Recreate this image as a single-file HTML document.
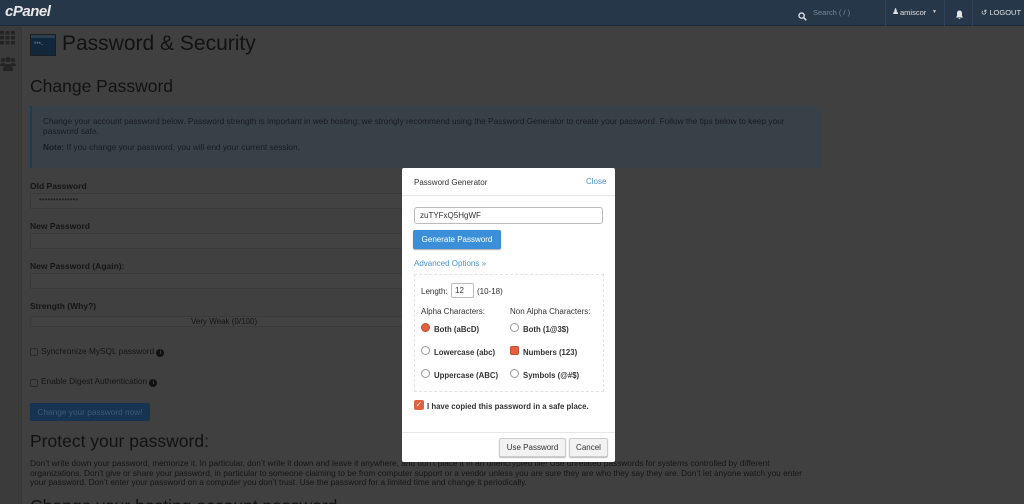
<!DOCTYPE html>
<html><head><meta charset="utf-8"><style>
*{box-sizing:border-box;margin:0;padding:0}
html,body{width:1024px;height:504px;overflow:hidden}
body{background:#404040;font-family:"Liberation Sans","DejaVu Sans",sans-serif;color:#111;position:relative}
.hdr{position:absolute;left:0;top:0;width:1024px;height:26px;background:#26374a;border-bottom:1px solid #1c2a38}
.logo{position:absolute;left:5px;top:3px;color:#e8e8e8;font-weight:bold;font-style:italic;font-size:15px;letter-spacing:-0.5px}
.sb{position:absolute;left:0;top:26px;width:22px;height:478px;background:#3b3b3b;border-right:1px solid #363636}
.a{position:absolute}
.lbl{position:absolute;left:30px;font-size:8.5px;font-weight:bold;color:#151515}
.inp{position:absolute;left:30px;width:380px;height:16px;border:1px solid #393939;background:#424242;border-radius:2px}
.p{font-size:8.3px;color:#151515;line-height:9.6px}
.m{position:absolute;left:402px;top:168px;width:213px;height:294px;background:#fff;color:#333;font-size:8px;border-radius:2px}
.m .t{position:absolute}
.rad{position:absolute;width:9px;height:9px;border:1px solid #999;border-radius:50%;background:#fff}
.rad.on{background:#e2603f;border-color:#c24d30}
.rl{position:absolute;font-weight:bold;font-size:7.8px;color:#333}
.btn{position:absolute;background:#f2f2f2;border:1px solid #ccc;border-radius:2px;font-size:8px;color:#333;text-align:center;line-height:17px;box-shadow:0 1px 1px #bbb}
</style></head><body>
<div class="hdr">
<div class="logo">cPanel</div>
<div class="a" style="left:798px;top:8px;width:9px;height:9px">
<svg width="9" height="9" viewBox="0 0 9 9"><circle cx="3.6" cy="3.6" r="2.6" stroke="#ddd" stroke-width="1.4" fill="none"/><path d="M5.6 5.6L8.3 8.3" stroke="#ddd" stroke-width="1.6"/></svg></div>
<div class="a" style="left:813px;top:8px;font-size:7.5px;color:#7b8896">Search ( / )</div>
<div class="a" style="left:885px;top:0;width:1px;height:26px;background:#304255"></div>
<div class="a" style="left:892px;top:7px;font-size:8px;color:#e0e0e0">&#9823;</div>
<div class="a" style="left:900px;top:8px;font-size:7.5px;color:#e0e0e0">amiscor</div>
<div class="a" style="left:932px;top:9px;font-size:5px;color:#ccc">&#9660;</div>
<div class="a" style="left:944px;top:0;width:1px;height:26px;background:#304255"></div>
<div class="a" style="left:955px;top:7px"><svg width="9" height="10" viewBox="0 0 9 10"><path d="M4.5 0.5C2.5 0.5 2 2 2 4V6L0.8 7.5H8.2L7 6V4C7 2 6.5 0.5 4.5 0.5Z M3.5 8.3H5.5A1 1 0 0 1 3.5 8.3Z" fill="#e6e6e6"/></svg></div>
<div class="a" style="left:972px;top:0;width:1px;height:26px;background:#304255"></div>
<div class="a" style="left:981px;top:8px;font-size:7.5px;color:#e0e0e0">&#8634; LOGOUT</div>
</div>
<div class="sb">
<svg style="position:absolute;left:0;top:5px" width="16" height="14"><g fill="#242424"><rect x="0" y="0" width="4" height="3.5"/><rect x="5.5" y="0" width="4" height="3.5"/><rect x="11" y="0" width="4" height="3.5"/><rect x="0" y="5" width="4" height="3.5"/><rect x="5.5" y="5" width="4" height="3.5"/><rect x="11" y="5" width="4" height="3.5"/><rect x="0" y="10" width="4" height="3.5"/><rect x="5.5" y="10" width="4" height="3.5"/><rect x="11" y="10" width="4" height="3.5"/></g></svg>
<svg style="position:absolute;left:0;top:31px" width="16" height="14"><g fill="#242424"><circle cx="3" cy="3" r="2.2"/><circle cx="8" cy="2.5" r="2.5"/><circle cx="13" cy="3" r="2.2"/><path d="M0 9Q0 6 3 6Q6 6 6 9Z M10 9Q10 6 13 6Q16 6 16 9Z M3 14Q3 7 8 7Q13 7 13 14Z"/></g></svg>
</div>
<div class="a" style="left:30px;top:34px;width:26px;height:22px;background:#13273b;border:1px solid #1e1e1e"><div style="height:3px;background:#2c3f52"></div><div style="color:#7a8ea2;font-size:6px;margin:4px 0 0 3px">***-</div></div>
<div class="a" style="left:62px;top:32px;font-size:21px;color:#121212">Password &amp; Security</div>
<div class="a" style="left:30px;top:76px;font-size:17.5px;color:#121212">Change Password</div>
<div class="a" style="left:30px;top:106px;width:792px;height:62px;background:#394148;border-left:2px solid #1d3a58">
<div class="p" style="position:absolute;left:11px;top:11px;width:770px;color:#161c22">Change your account password below. Password strength is important in web hosting; we strongly recommend using the Password Generator to create your password. Follow the tips below to keep your password safe.</div>
<div class="p" style="position:absolute;left:11px;top:37px;color:#161c22"><b>Note:</b> If you change your password, you will end your current session.</div>
</div>
<div class="lbl" style="top:181px">Old Password</div>
<div class="inp" style="top:193px"><span style="position:absolute;left:8px;top:1px;font-size:8px;color:#222">••••••••••••••</span></div>
<div class="lbl" style="top:221px">New Password</div>
<div class="inp" style="top:233px"></div>
<div class="lbl" style="top:261px">New Password (Again):</div>
<div class="inp" style="top:273px"></div>
<div class="lbl" style="top:301px">Strength (Why?)</div>
<div class="inp" style="top:316px;height:11px;border-color:#3a3a3a"><span style="position:absolute;left:160px;top:0px;font-size:8px;color:#151515">Very Weak (0/100)</span></div>
<div class="a" style="left:30px;top:348px;width:8px;height:8px;border:1px solid #2a2a2a;border-radius:2px"></div>
<div class="a p" style="left:41px;top:347px">Synchronize MySQL password <span style="display:inline-block;width:8px;height:8px;border-radius:50%;background:#111;color:#444;font-size:6px;text-align:center;line-height:8px;font-weight:bold">i</span></div>
<div class="a" style="left:30px;top:379px;width:8px;height:8px;border:1px solid #2a2a2a;border-radius:2px"></div>
<div class="a p" style="left:41px;top:377px">Enable Digest Authentication <span style="display:inline-block;width:8px;height:8px;border-radius:50%;background:#111;color:#444;font-size:6px;text-align:center;line-height:8px;font-weight:bold">i</span></div>
<div class="a" style="left:30px;top:403px;width:120px;height:18px;background:#163452;border-radius:2px;color:#3e5c78;font-size:8.3px;line-height:18px;text-align:center">Change your password now!</div>
<div class="a" style="left:30px;top:431px;font-size:17.5px;color:#121212">Protect your password:</div>
<div class="a p" style="left:30px;top:459px;width:780px">Don’t write down your password, memorize it. In particular, don’t write it down and leave it anywhere, and don’t place it in an unencrypted file! Use unrelated passwords for systems controlled by different organizations. Don’t give or share your password, in particular to someone claiming to be from computer support or a vendor unless you are sure they are who they say they are. Don’t let anyone watch you enter your password. Don’t enter your password on a computer you don’t trust. Use the password for a limited time and change it periodically.</div>
<div class="a" style="left:30px;top:496px;font-size:17.5px;color:#121212">Change your hosting account password</div>
<div class="m">
<div class="t" style="left:12px;top:10px;font-size:8px;color:#333">Password Generator</div>
<div class="t" style="left:184px;top:9px;font-size:8px;color:#4a90d0">Close</div>
<div class="t" style="left:0;top:27px;width:213px;height:1px;background:#e6e6e6"></div>
<div class="t" style="left:12px;top:39px;width:189px;height:17px;border:1px solid #bbb;border-radius:3px;padding:3px 5px;font-size:8px;color:#333">zuTYFxQ5HgWF</div>
<div class="t" style="left:11px;top:62px;width:88px;height:19px;background:#3a8fd8;border-radius:2px;color:#fff;font-size:8px;line-height:19px;text-align:center;box-shadow:0 1px 1px #aaa">Generate Password</div>
<div class="t" style="left:12px;top:91px;font-size:8px;color:#4a90d0">Advanced Options »</div>
<div class="t" style="left:12px;top:106px;width:190px;height:118px;border:1px dashed #e2e2e2"></div>
<div class="t" style="left:19px;top:119px">Length:</div>
<div class="t" style="left:49px;top:115px;width:23px;height:15px;border:1px solid #bbb;border-radius:2px;padding:2px 3px">12</div>
<div class="t" style="left:75px;top:119px">(10-18)</div>
<div class="t" style="left:19px;top:139px">Alpha Characters:</div>
<div class="t" style="left:108px;top:139px">Non Alpha Characters:</div>
<div class="rad on" style="left:19px;top:155px"></div><div class="rl" style="left:32px;top:157px">Both (aBcD)</div>
<div class="rad" style="left:19px;top:178px"></div><div class="rl" style="left:32px;top:180px">Lowercase (abc)</div>
<div class="rad" style="left:19px;top:201px"></div><div class="rl" style="left:32px;top:203px">Uppercase (ABC)</div>
<div class="rad" style="left:108px;top:155px"></div><div class="rl" style="left:121px;top:157px">Both (1@3$)</div>
<div class="rad on" style="left:108px;top:178px;border-radius:2px"></div><div class="rl" style="left:121px;top:180px">Numbers (123)</div>
<div class="rad" style="left:108px;top:201px"></div><div class="rl" style="left:121px;top:203px">Symbols (@#$)</div>
<div class="t" style="left:12px;top:232px;width:10px;height:10px;background:#e2603f;border-radius:2px;color:#fff;font-size:8px;line-height:10px;text-align:center">&#10003;</div>
<div class="rl" style="left:25px;top:234px">I have copied this password in a safe place.</div>
<div class="t" style="left:0;top:264px;width:213px;height:1px;background:#e6e6e6"></div>
<div class="btn" style="left:97px;top:270px;width:67px;height:19px">Use Password</div>
<div class="btn" style="left:167px;top:270px;width:39px;height:19px">Cancel</div>
</div>
</body></html>
